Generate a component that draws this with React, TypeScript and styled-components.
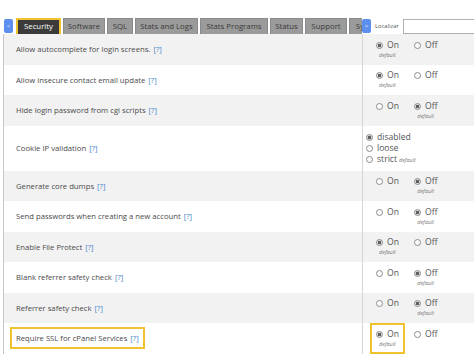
import React from "react";
import styled, { createGlobalStyle } from "styled-components";

interface Setting {
  label: string;
  options: string[];
  value: string;
  def: string;
  stacked?: boolean;
  highlight?: boolean;
}

const tabs = [
  { name: "Security", w: 45 },
  { name: "Software", w: 42 },
  { name: "SQL", w: 26 },
  { name: "Stats and Logs", w: 63 },
  { name: "Stats Programs", w: 68 },
  { name: "Status", w: 33 },
  { name: "Support", w: 42 },
  { name: "System", w: 40 }
];

const settings: Setting[] = [
  { label: "Allow autocomplete for login screens.", options: ["On", "Off"], value: "On", def: "On" },
  { label: "Allow insecure contact email update", options: ["On", "Off"], value: "On", def: "On" },
  { label: "Hide login password from cgi scripts", options: ["On", "Off"], value: "Off", def: "Off" },
  {
    label: "Cookie IP validation",
    options: ["disabled", "loose", "strict"],
    value: "disabled",
    def: "strict",
    stacked: true
  },
  { label: "Generate core dumps", options: ["On", "Off"], value: "Off", def: "Off" },
  { label: "Send passwords when creating a new account", options: ["On", "Off"], value: "Off", def: "Off" },
  { label: "Enable File Protect", options: ["On", "Off"], value: "On", def: "On" },
  { label: "Blank referrer safety check", options: ["On", "Off"], value: "Off", def: "Off" },
  { label: "Referrer safety check", options: ["On", "Off"], value: "Off", def: "Off" },
  {
    label: "Require SSL for cPanel Services",
    options: ["On", "Off"],
    value: "On",
    def: "On",
    highlight: true
  }
];

const GlobalStyle = createGlobalStyle`
  html, body {
    margin: 0;
    padding: 0;
    background: #fff;
  }
  body {
    font-family: "Open Sans", "Liberation Sans", sans-serif;
    color: #444;
  }
`;

const Page = styled.div`
  width: 474px;
  height: 355px;
  overflow: hidden;
  padding-top: 18px;
  box-sizing: border-box;
`;

const TopBar = styled.div`
  display: flex;
  align-items: flex-end;
  height: 16px;
`;

const NavButton = styled.div`
  flex: none;
  width: 9px;
  height: 14px;
  margin-left: ${(p: { $left?: number }) => p.$left ?? 0}px;
  border-radius: 2px;
  background: #5d8ff0;
  color: #fff;
  font-size: 6px;
  line-height: 14px;
  text-align: center;
  align-self: center;
`;

const TabStrip = styled.div`
  flex: none;
  display: flex;
  gap: 2px;
  width: 346px;
  margin-left: 3px;
  overflow: hidden;
  height: 16px;
  align-items: stretch;
`;

const Tab = styled.div<{ $active?: boolean; $w: number }>`
  flex: none;
  box-sizing: border-box;
  width: ${(p) => p.$w}px;
  overflow: hidden;
  font-size: 7.8px;
  line-height: ${(p) => (p.$active ? 12 : 14)}px;
  text-align: center;
  white-space: nowrap;
  color: ${(p) => (p.$active ? "#fff" : "#3a3a3a")};
  background: ${(p) => (p.$active ? "#3b3b3b" : "#9b9b9b")};
  border: ${(p) => (p.$active ? "2px solid #f2c12e" : "1px solid #8a8a8a")};
  border-bottom: none;
`;

const SearchLabel = styled.span`
  flex: none;
  margin-left: 4px;
  font-size: 5.8px;
  color: #555;
  align-self: center;
`;

const SearchInput = styled.div`
  flex: none;
  width: 90px;
  height: 13px;
  margin-left: 4px;
  border: 1px solid #b0b0b0;
  background: #fff;
  align-self: center;
`;

const Table = styled.div`
  margin-left: 3px;
  border-left: 1px solid #c6c6c6;
`;

const Row = styled.div<{ $shaded: boolean; $tall?: boolean }>`
  display: grid;
  grid-template-columns: 358px 1fr;
  height: ${(p) => (p.$tall ? 45 : 30.5)}px;
  background: ${(p) => (p.$shaded ? "#f2f2f2" : "#fff")};
`;

const LabelCell = styled.div`
  display: flex;
  align-items: center;
  padding-left: 12px;
`;

const Label = styled.span<{ $highlight?: boolean }>`
  font-size: 7.7px;
  color: #4a4a4a;
  white-space: nowrap;
  outline: ${(p) => (p.$highlight ? "2px solid #f2c12e" : "none")};
  outline-offset: 4px;
`;

const Help = styled.span`
  margin-left: 3px;
  color: #3f86c7;
`;

const ValueCell = styled.div<{ $stacked?: boolean }>`
  display: flex;
  flex-direction: ${(p) => (p.$stacked ? "column" : "row")};
  justify-content: ${(p) => (p.$stacked ? "center" : "flex-start")};
  align-items: ${(p) => (p.$stacked ? "flex-start" : "center")};
  padding-left: ${(p) => (p.$stacked ? 3 : 13)}px;
  border-left: 1px solid #d6d6d6;
`;

const OptionGroup = styled.div`
  display: flex;
  align-items: flex-start;
  gap: 15px;
`;

const Option = styled.div<{ $highlight?: boolean }>`
  display: flex;
  flex-direction: column;
  align-items: center;
  outline: ${(p) => (p.$highlight ? "2px solid #f2c12e" : "none")};
  outline-offset: 4px;
`;

const RadioLine = styled.div`
  display: flex;
  align-items: center;
  gap: 4px;
  font-size: 8.6px;
  line-height: 11px;
  color: #555;
  white-space: nowrap;
`;

const Radio = styled.span<{ $checked: boolean }>`
  flex: none;
  width: 7px;
  height: 7px;
  box-sizing: border-box;
  border-radius: 50%;
  border: 1px solid #8c8c8c;
  background: ${(p) =>
    p.$checked
      ? "radial-gradient(circle, #5e5e5e 0 1.5px, #dedede 2px)"
      : "#fff"};
`;

const DefaultNote = styled.span`
  font-size: 5.4px;
  line-height: 8px;
  font-style: italic;
  color: #777;
  margin-left: ${(p: { $inline?: boolean }) => (p.$inline ? 2 : 0)}px;
`;

const SettingRow: React.FC<{ s: Setting; shaded: boolean }> = ({ s, shaded }) => (
  <Row $shaded={shaded} $tall={s.stacked}>
    <LabelCell>
      <Label $highlight={s.highlight}>
        {s.label}
        <Help>[?]</Help>
      </Label>
    </LabelCell>
    {s.stacked ? (
      <ValueCell $stacked>
        {s.options.map((o) => (
          <RadioLine key={o}>
            <Radio $checked={o === s.value} />
            <span>
              {o}
              {o === s.def && <DefaultNote $inline>default</DefaultNote>}
            </span>
          </RadioLine>
        ))}
      </ValueCell>
    ) : (
      <ValueCell>
        <OptionGroup>
          {s.options.map((o) => (
            <Option key={o} $highlight={s.highlight && o === s.value}>
              <RadioLine>
                <Radio $checked={o === s.value} />
                {o}
              </RadioLine>
              {o === s.def && <DefaultNote>default</DefaultNote>}
            </Option>
          ))}
        </OptionGroup>
      </ValueCell>
    )}
  </Row>
);

const App: React.FC = () => (
  <Page>
    <GlobalStyle />
    <TopBar>
      <NavButton $left={4}>&lt;</NavButton>
      <TabStrip>
        {tabs.map((t, i) => (
          <Tab key={t.name} $active={i === 0} $w={t.w}>
            {t.name}
          </Tab>
        ))}
      </TabStrip>
      <NavButton>&gt;</NavButton>
      <SearchLabel>Localizar</SearchLabel>
      <SearchInput />
    </TopBar>
    <Table>
      {settings.map((s, i) => (
        <SettingRow key={s.label} s={s} shaded={i % 2 === 0} />
      ))}
    </Table>
  </Page>
);

export default App;
